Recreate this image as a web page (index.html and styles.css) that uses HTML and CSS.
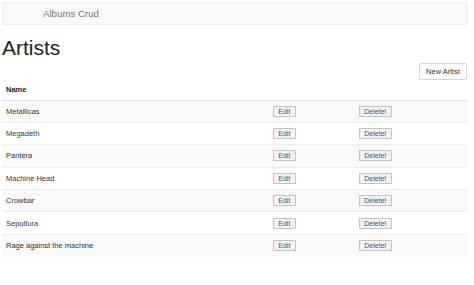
FILE: index.html
```html
<!DOCTYPE html>
<html>
<head>
<meta charset="utf-8">
<link rel="stylesheet" href="styles.css">
</head>
<body>
<div class="page">
  <nav class="navbar"><span class="brand">Albums Crud</span></nav>
  <h1 class="title">Artists</h1>
  <div class="actions"><button class="btn-new">New Artist</button></div>
  <table class="artists">
    <colgroup><col class="c1"><col class="c2"><col class="c3"></colgroup>
    <thead><tr><th>Name</th><th></th><th></th></tr></thead>
    <tbody>
      <tr><td>Metallicas</td><td><button class="btn">Edit</button></td><td><button class="btn">Delete!</button></td></tr>
      <tr><td>Megadeth</td><td><button class="btn">Edit</button></td><td><button class="btn">Delete!</button></td></tr>
      <tr><td>Pantera</td><td><button class="btn">Edit</button></td><td><button class="btn">Delete!</button></td></tr>
      <tr><td>Machine Head</td><td><button class="btn">Edit</button></td><td><button class="btn">Delete!</button></td></tr>
      <tr><td>Crowbar</td><td><button class="btn">Edit</button></td><td><button class="btn">Delete!</button></td></tr>
      <tr><td>Sepultura</td><td><button class="btn">Edit</button></td><td><button class="btn">Delete!</button></td></tr>
      <tr><td>Rage against the machine</td><td><button class="btn">Edit</button></td><td><button class="btn">Delete!</button></td></tr>
    </tbody>
  </table>
</div>
</body>
</html>
```
FILE: styles.css
```css
html, body {
  margin: 0;
  padding: 0;
  background: #fff;
  font-family: "Liberation Sans", Arial, sans-serif;
  color: #333;
}
.page {
  padding: 2px 6px 0 2px;
}
.navbar {
  box-sizing: border-box;
  height: 23px;
  background: #f8f8f8;
  border: 1px solid #ececec;
  border-radius: 2px;
  display: flex;
  align-items: center;
  padding-left: 40px;
}
.brand {
  font-size: 9.7px;
  color: #777;
  line-height: 12px;
}
.title {
  margin: 11px 0 0 0;
  font-size: 21px;
  line-height: 23px;
  font-weight: 500;
  color: #222;
}
.actions {
  display: flex;
  justify-content: flex-end;
  margin-top: 4px;
  padding-right: 1px;
}
.btn-new {
  box-sizing: border-box;
  height: 17px;
  width: 48px;
  padding: 0;
  background: #fff;
  border: 1px solid #d6d6d6;
  border-radius: 2px;
  font-family: "Liberation Sans", Arial, sans-serif;
  font-size: 7.5px;
  color: #333;
}
.artists {
  width: 466px;
  border-collapse: collapse;
  table-layout: fixed;
  font-size: 7.5px;
}
.c1 { width: 266px; }
.c2 { width: 86px; }
.c3 { width: 114px; }
.artists th {
  box-sizing: border-box;
  height: 20px;
  text-align: left;
  font-weight: bold;
  padding: 0 4px;
  border-bottom: 1px solid #e2e2e2;
  color: #222;
}
.artists td {
  box-sizing: border-box;
  height: 22.4px;
  padding: 0 4.8px 0 4px;
  border-top: 1px solid #ececec;
  vertical-align: middle;
}
.artists td + td {
  padding-left: 4.8px;
}
.artists thead + tbody tr:first-child td {
  border-top: 0;
}
.artists tbody tr:nth-child(odd) td {
  background: #f9f9f9;
}
.btn {
  box-sizing: border-box;
  height: 11px;
  padding: 0 4.5px;
  background: #f2f2f2;
  border: 1px solid #c4c4c4;
  border-radius: 0;
  font-family: "Liberation Sans", Arial, sans-serif;
  font-size: 7px;
  line-height: 9px;
  color: #555;
  display: inline-block;
  vertical-align: middle;
}
```
